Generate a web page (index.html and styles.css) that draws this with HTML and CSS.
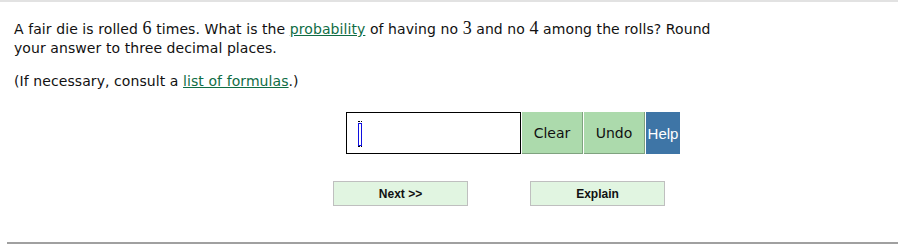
FILE: index.html
```html
<!DOCTYPE html>
<html>
<head>
<meta charset="utf-8">
<link rel="stylesheet" href="styles.css">
</head>
<body>
<div class="page">
  <div class="question">
    <p class="q-text">A fair die is rolled <span class="num">6</span> times. What is the <a href="#" class="link">probability</a> of having no <span class="num">3</span> and no <span class="num">4</span> among the rolls? Round your answer to three decimal places.</p>
    <p class="q-note">(If necessary, consult a <a href="#" class="link">list of formulas</a>.)</p>
  </div>
  <div class="answer-row">
    <div class="answer-box"><span class="caret"></span></div>
    <button class="btn-green">Clear</button>
    <button class="btn-green">Undo</button>
    <button class="btn-help">Help</button>
  </div>
  <div class="nav-row">
    <button class="btn-nav">Next &gt;&gt;</button>
    <button class="btn-nav">Explain</button>
  </div>
  <div class="bottom-rule"></div>
</div>
</body>
</html>
```
FILE: styles.css
```css
html, body {
  margin: 0;
  padding: 0;
  background: #fff;
}
.page {
  width: 898px;
  height: 246px;
  border-top: 2px solid #e2e2e2;
  box-sizing: border-box;
  font-family: "DejaVu Sans", Verdana, sans-serif;
  color: #111;
}
.question {
  padding: 17px 0 0 14px;
  width: 715px;
}
.q-text {
  margin: 0;
  font-size: 14px;
  line-height: 19px;
  letter-spacing: 0.08px;
}
.q-note {
  margin: 14px 0 0 0;
  font-size: 14px;
  line-height: 19px;
  letter-spacing: 0.08px;
}
.num {
  font-family: "Liberation Serif", "Times New Roman", serif;
  font-size: 18px;
  line-height: 1;
}
.link {
  color: #106d45;
  text-decoration: underline;
}
.answer-row {
  display: flex;
  margin: 21px 0 0 346px;
  height: 42px;
}
.answer-box {
  width: 175px;
  height: 42px;
  box-sizing: border-box;
  border: 1px solid #000;
  background: #fff;
  position: relative;
}
.caret {
  position: absolute;
  left: 11px;
  top: 10px;
  width: 2px;
  height: 21px;
  border: 1px solid #1010e0;
  background: #fff;
}
.caret::before, .caret::after {
  content: "";
  position: absolute;
  left: -1px;
  width: 4px;
  height: 1px;
  border-top: 1px dotted #000;
}
.caret::before { top: -3px; }
.caret::after { bottom: -3px; }
button {
  font: inherit;
  margin: 0;
  cursor: pointer;
}
.btn-green {
  width: 61px;
  height: 42px;
  margin-left: 1px;
  background: #acdaac;
  border: none;
  border-right: 1px solid #7fa27f;
  border-bottom: 1px solid #7fa27f;
  font-family: "DejaVu Sans", Verdana, sans-serif;
  font-size: 14px;
  color: #111;
  padding: 0;
}
.btn-help {
  width: 34px;
  height: 42px;
  margin-left: 1px;
  background: #3e75a6;
  border: none;
  color: #fff;
  font-family: "Liberation Sans", Arial, sans-serif;
  font-size: 15px;
  padding: 0;
}
.nav-row {
  display: flex;
  gap: 62px;
  margin: 27px 0 0 333px;
}
.btn-nav {
  width: 135px;
  height: 25px;
  box-sizing: border-box;
  background: #e1f5e1;
  border: 1px solid #bfbfbf;
  font-family: "Liberation Sans", Arial, sans-serif;
  font-weight: bold;
  font-size: 12px;
  color: #111;
  padding: 0;
}
.bottom-rule {
  margin: 36px 0 0 7px;
  height: 2px;
  background: #a0a0a0;
}
```
